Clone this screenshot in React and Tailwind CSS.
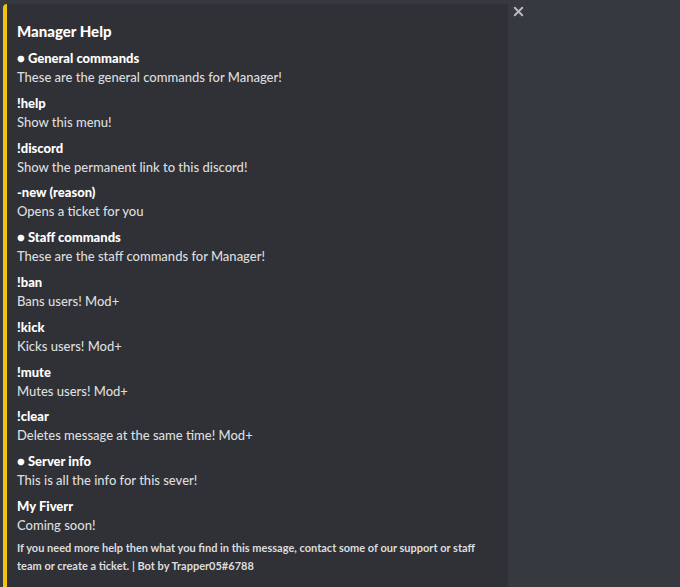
import { X } from "lucide-react";

const fields = [
  ["● General commands", "These are the general commands for Manager!"],
  ["!help", "Show this menu!"],
  ["!discord", "Show the permanent link to this discord!"],
  ["-new (reason)", "Opens a ticket for you"],
  ["● Staff commands", "These are the staff commands for Manager!"],
  ["!ban", "Bans users! Mod+"],
  ["!kick", "Kicks users! Mod+"],
  ["!mute", "Mutes users! Mod+"],
  ["!clear", "Deletes message at the same time! Mod+"],
  ["● Server info", "This is all the info for this sever!"],
  ["My Fiverr", "Coming soon!"],
];

export default function App() {
  return (
    <div
      className="flex h-[587px] w-full overflow-hidden bg-[#36393f] pt-[4px]"
      style={{ fontFamily: 'Lato, "Open Sans", sans-serif' }}
    >
      <div className="ml-[3px] h-[620px] w-[505px] shrink-0 rounded-l-[4px] border-l-4 border-[#f1c40f] bg-[#2f3136] pl-[10px] pr-4 pt-[17px]">
        <h2 className="text-[15px] font-black leading-5 text-white">Manager Help</h2>
        <div className="mt-2 flex flex-col gap-[6.8px]">
          {fields.map(([name, value]) => (
            <div key={name}>
              <div className="text-[13px] font-black leading-[19px] text-white">{name}</div>
              <div className="text-[13px] font-medium leading-[19px] text-[#dcddde]">{value}</div>
            </div>
          ))}
        </div>
        <p className="mt-[4px] text-[11px] font-bold leading-[18px] text-[#dcddde]">
          If you need more help then what you find in this message, contact some of our support or staff team or create a ticket. | Bot by Trapper05#6788
        </p>
      </div>
      <button className="ml-[3px] flex h-[16px] w-[16px] items-start text-[#b9bbbe]">
        <X size={15} strokeWidth={3} />
      </button>
    </div>
  );
}
